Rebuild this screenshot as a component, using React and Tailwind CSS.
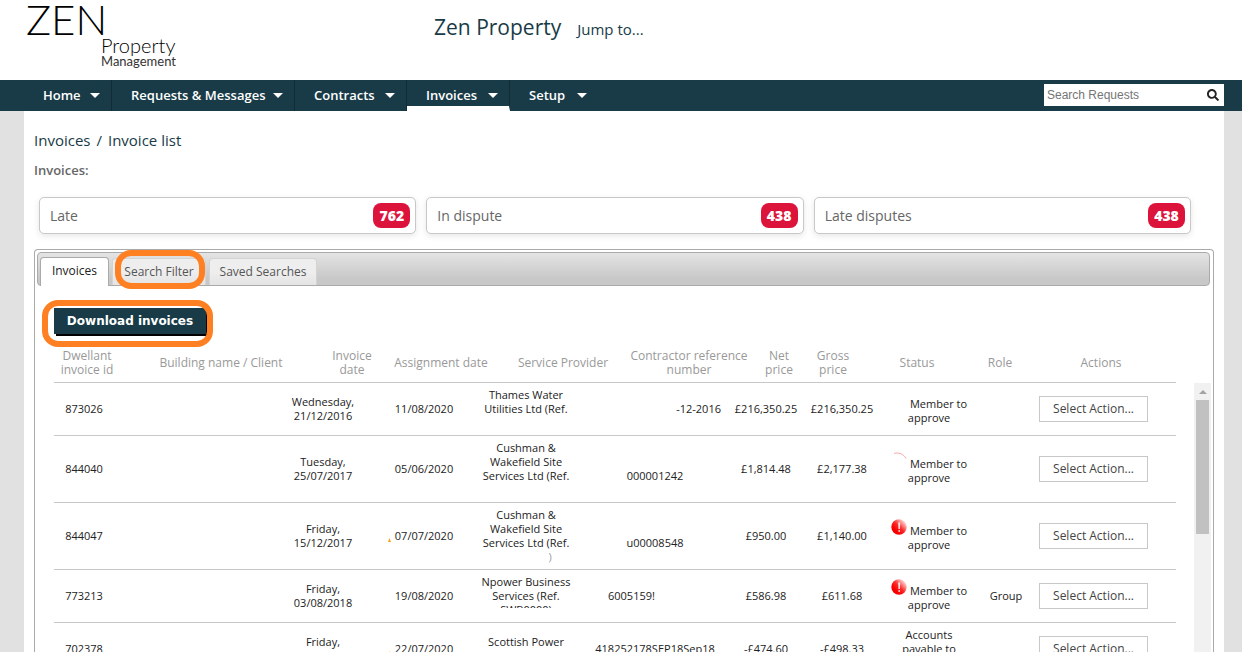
import { FaSearch } from "react-icons/fa";

const navItems = [
  { label: "Home", width: "w-[88px]" },
  { label: "Requests & Messages", width: "w-[183px]" },
  { label: "Contracts", width: "w-[112px]" },
  { label: "Invoices", width: "w-[103px]", active: true },
  { label: "Setup", width: "w-[88px]", last: true },
];

const counters = [
  { label: "Late", count: 762 },
  { label: "In dispute", count: 438 },
  { label: "Late disputes", count: 438 },
];

const headColumns = [
  { label: "Dwellant invoice id", width: "w-[66px]" },
  { label: "Building name / Client", width: "w-[202px]" },
  { label: "Invoice date", width: "w-[60px]" },
  { label: "Assignment date", width: "w-[118px]" },
  { label: "Service Provider", width: "w-[126px]" },
  { label: "Contractor reference number", width: "w-[126px]" },
  { label: "Net price", width: "w-[54px]" },
  { label: "Gross price", width: "w-[54px]" },
  { label: "Status", width: "w-[114px]" },
  { label: "Role", width: "w-[52px]" },
  { label: "Actions", width: "w-[150px]" },
];

const bodyWidths = [
  "w-[60px]",
  "w-[158px]",
  "w-[102px]",
  "w-[100px]",
  "w-[104px]",
  "w-[154px]",
  "w-[68px]",
  "w-[84px]",
  "w-[90px]",
  "w-[64px]",
  "w-[138px]",
];

const rows = [
  {
    id: "873026",
    day: "Wednesday,",
    date: "21/12/2016",
    assigned: "11/08/2020",
    provider: ["Thames Water", "Utilities Ltd (Ref.", ""],
    reference: ["-12-2016"],
    refClass: "text-right pr-[11px]",
    net: "£216,350.25",
    gross: "£216,350.25",
    status: ["Member to", "approve"],
    icon: "blank",
  },
  {
    id: "844040",
    day: "Tuesday,",
    date: "25/07/2017",
    assigned: "05/06/2020",
    provider: ["Cushman &", "Wakefield Site", "Services Ltd (Ref.", ""],
    reference: ["", "000001242"],
    refClass: "text-center",
    net: "£1,814.48",
    gross: "£2,177.38",
    status: ["Member to", "approve"],
    icon: "faded",
  },
  {
    id: "844047",
    day: "Friday,",
    date: "15/12/2017",
    assigned: "07/07/2020",
    provider: ["Cushman &", "Wakefield Site", "Services Ltd (Ref.", ""],
    trailing: "paren",
    flagged: true,
    reference: ["", "u00008548"],
    refClass: "text-center",
    net: "£950.00",
    gross: "£1,140.00",
    status: ["Member to", "approve"],
    icon: "alert",
  },
  {
    id: "773213",
    day: "Friday,",
    date: "03/08/2018",
    assigned: "19/08/2020",
    provider: ["Npower Business", "Services (Ref.", ""],
    trailing: "clipped",
    reference: ["6005159!"],
    refClass: "text-left pl-[30px]",
    net: "£586.98",
    gross: "£611.68",
    status: ["Member to", "approve"],
    icon: "alert",
    role: "Group",
  },
  {
    id: "702378",
    day: "Friday,",
    date: "14/09/2018",
    assigned: "22/07/2020",
    provider: ["Scottish Power", "(Ref. SCO0000)"],
    flagged: true,
    reference: ["418252178SEP18Sep18"],
    refClass: "text-center",
    net: "-£474.60",
    gross: "-£498.33",
    status: ["Accounts", "payable to", "approve"],
  },
];

function Caret() {
  return (
    <svg className="h-[5px] w-[10px]" viewBox="0 0 10 5" aria-hidden="true">
      <path d="M0 0h10L5 5z" fill="#fff" />
    </svg>
  );
}

function StatusIcon({ kind }) {
  return (
    <svg className="mr-[3px] inline-block size-4 align-[0px]" viewBox="0 0 16 16" aria-hidden="true">
      {kind === "faded" && (
        <path d="M3 1.5C7 .2 12.500 1.500 15 6.500" fill="none" stroke="#f58080" strokeWidth="1" strokeOpacity="0.7" />
      )}
      {kind === "alert" && (
        <>
          <defs>
            <linearGradient id="alertRed" x1="0.25" y1="0.7" x2="0.85" y2="0.1">
              <stop offset="0" stopColor="#f80000" />
              <stop offset="0.4" stopColor="#fb2a2a" />
              <stop offset="1" stopColor="#ffe4e4" />
            </linearGradient>
          </defs>
          <circle cx="8" cy="8" r="7.700" fill="url(#alertRed)" />
          <path d="M7.200 3.500h2l-.3 6.500H7.500z" fill="#fff" fillOpacity="0.85" />
          <circle cx="8.200" cy="12" r="0.900" fill="#fff" fillOpacity="0.85" />
        </>
      )}
    </svg>
  );
}

function ProviderCell({ row }) {
  return row.provider.map((line, i) => (
    <div key={i} className="h-[14px]">
      {line}
      {!line && row.trailing === "paren" && <span className="pl-12 text-gray-400">)</span>}
      {!line && row.trailing === "clipped" && <div className="h-[5px] overflow-hidden">SWB0000)</div>}
    </div>
  ));
}

function Row({ row }) {
  return (
    <tr className="border-b border-[#c8c8c8]">
      <td className="py-[5px]">{row.id}</td>
      <td></td>
      <td>
        {row.day}
        <br />
        {row.date}
      </td>
      <td>
        <span className="relative">
          {row.flagged && (
            <svg className="absolute bottom-px -left-[7px] h-[4px] w-[3px]" viewBox="0 0 3 4" aria-hidden="true">
              <path d="M1.500 0L3 4H0z" fill="#f9a11b" />
            </svg>
          )}
          {row.assigned}
        </span>
      </td>
      <td className="py-[5px] whitespace-nowrap">
        <ProviderCell row={row} />
      </td>
      <td className={row.refClass}>
        {row.reference.map((line, i) => (
          <div key={i} className="h-[14px]">
            {line}
          </div>
        ))}
      </td>
      <td>{row.net}</td>
      <td>{row.gross}</td>
      <td className={row.icon ? "pb-[2px] whitespace-nowrap" : "py-[5px] whitespace-nowrap"}>
        {row.status.map((line, i) => (
          <div key={line}>
            {i === 0 && row.icon && <StatusIcon kind={row.icon} />}
            {line}
          </div>
        ))}
      </td>
      <td>{row.role}</td>
      <td className="pl-px text-left">
        <button
          type="button"
          className="h-[26px] w-[109px] border border-[#c8c8c8] bg-white text-[12px] leading-[14px] text-[#444]"
        >
          Select Action...
        </button>
      </td>
    </tr>
  );
}

function Ring({ className }) {
  return (
    <span
      aria-hidden="true"
      className={`pointer-events-none absolute z-10 rounded-2xl border-[6px] border-[#ff8022] ${className}`}
    />
  );
}

export default function App() {
  return (
    <div className="flex h-screen flex-col overflow-hidden bg-white pb-3 font-['Open_Sans',sans-serif] text-[#222]">
      <header className="flex h-20 shrink-0 items-start">
        <div className="w-[434px] shrink-0 pt-px pl-[26px] font-['Lato',sans-serif] text-black">
          <div className="text-[42px] leading-[36px] font-light">ZEN</div>
          <div className="pl-[75px] text-[20px] leading-[16px] font-light">Property</div>
          <div className="pl-[75px] text-[13px] leading-[16px] text-[#333]">Management</div>
        </div>
        <div className="flex items-baseline gap-4 pt-[11px] text-[#183b47]">
          <h1 className="text-[21px] leading-8">Zen Property</h1>
          <a href="#jump" className="text-[15px]">
            Jump to...
          </a>
        </div>
      </header>

      <nav className="flex h-[31px] shrink-0 items-start justify-between bg-[#183b47] pr-[18px] pl-6">
        <ul className="flex h-full">
          {navItems.map((item) => (
            <li
              key={item.label}
              className={`${item.width} ${item.active ? "border-b-[5px] border-b-white" : ""} ${
                item.last ? "" : "border-r border-r-[#122c35]"
              }`}
            >
              <a
                href={`#${item.label}`}
                className="flex h-[31px] items-center justify-between pr-[11px] pl-[19px] text-[13px] font-semibold whitespace-nowrap text-white"
              >
                {item.label}
                <Caret />
              </a>
            </li>
          ))}
        </ul>
        <form className="mt-1 flex h-[22px] w-[180px] items-center bg-white pr-[5px] pl-[3px]">
          <input
            type="search"
            aria-label="Search Requests"
            placeholder="Search Requests"
            className="min-w-0 flex-1 bg-transparent font-['Liberation_Sans',sans-serif] text-[12px] text-[#222] outline-none placeholder:text-[#757575]"
          />
          <button type="submit" aria-label="Search">
            <FaSearch className="size-3 text-[#222]" />
          </button>
        </form>
      </nav>

      <div className="min-h-0 flex-1 bg-[#e1e1e1] pr-[18px] pl-6">
        <main className="flex h-full flex-col bg-white pr-[10px] pl-[10px]">
          <div className="flex gap-[6px] pt-[18px] text-[15px] leading-[22px] text-[#183b47]">
            <a href="#invoices">Invoices</a>
            <span>/</span>
            <a href="#list">Invoice list</a>
          </div>
          <h2 className="pt-[10px] text-[13px] leading-[18px] font-semibold text-[#666]">Invoices:</h2>

          <div className="mt-[18px] mr-[23px] ml-[5px] grid shrink-0 grid-cols-3 gap-[10px]">
            {counters.map((c) => (
              <a
                key={c.label}
                href={`#${c.label}`}
                className="flex h-[37px] items-center justify-between rounded-[5px] border border-[#c8c8c8] bg-white pr-[5px] pl-[10px] text-[14px] text-[#666] shadow-[0_2px_6px_rgba(0,0,0,0.1)]"
              >
                {c.label}
                <span className="flex h-[25px] w-[37px] items-center justify-center rounded-lg bg-[#dc143c] text-[14px] font-extrabold text-white">
                  {c.count}
                </span>
              </a>
            ))}
          </div>

          <section className="mt-[15px] flex min-h-0 flex-1 flex-col rounded-t-[4px] border border-b-0 border-[#aaa] p-[2px] pb-0">
            <div
              role="tablist"
              className="mr-px flex h-[34px] shrink-0 items-end gap-[3px] rounded-[4px] border border-[#aaa] bg-linear-to-b from-[#e4e4e4] to-[#c8c8c8] to-80% pl-[2px] text-[12px]"
            >
              <button
                type="button"
                role="tab"
                aria-selected="true"
                className="-mb-px h-[29px] w-[69px] rounded-t-[4px] border border-b-0 border-[#aaa] bg-white pb-[2px] text-[#222]"
              >
                Invoices
              </button>
              <div className="relative">
                <button
                  type="button"
                  role="tab"
                  aria-selected="false"
                  className="block h-[27px] w-[94px] rounded-t-[4px] border border-b-0 border-[#d3d3d3] bg-linear-to-b from-[#eee] from-50% to-[#e4e4e4] pb-px text-[#555]"
                >
                  Search Filter
                </button>
                <Ring className="-top-2 left-[3px] h-[39px] w-[90px]" />
              </div>
              <button
                type="button"
                role="tab"
                aria-selected="false"
                className="h-[27px] w-[108px] rounded-t-[4px] border border-b-0 border-[#d3d3d3] bg-linear-to-b from-[#eee] from-50% to-[#e4e4e4] pb-px text-[#555]"
              >
                Saved Searches
              </button>
            </div>

            <div className="flex min-h-0 flex-1 flex-col pt-[22px] pl-[17px]">
              <div className="relative self-start">
                <button
                  type="button"
                  className="block h-[26px] w-[152px] bg-[#183b47] font-['DejaVu_Sans',sans-serif] text-[12px] font-bold text-white shadow-[2px_2px_0_#000]"
                >
                  Download invoices
                </button>
                <Ring className="-top-2 -left-3 h-[47px] w-[171px]" />
              </div>

              <table className="mt-[15px] mr-[35px] shrink-0 table-fixed border-collapse text-[12px] leading-[14px] text-[#999]">
                <colgroup>
                  {headColumns.map((c) => (
                    <col key={c.label} className={c.width} />
                  ))}
                </colgroup>
                <thead>
                  <tr className="border-b border-[#c8c8c8]">
                    {headColumns.map((c) => (
                      <th key={c.label} scope="col" className="px-[3px] pb-[5px] font-normal">
                        {c.label}
                      </th>
                    ))}
                  </tr>
                </thead>
              </table>

              <div className="flex min-h-0 flex-1">
                <div className="min-w-0 flex-1 overflow-hidden">
                  <table className="w-full table-fixed border-collapse text-center text-[11px] leading-[14px]">
                    <colgroup>
                      {bodyWidths.map((w, i) => (
                        <col key={i} className={w} />
                      ))}
                    </colgroup>
                    <tbody>
                      {rows.map((row) => (
                        <Row key={row.id} row={row} />
                      ))}
                    </tbody>
                  </table>
                </div>
                <div aria-hidden="true" className="ml-[18px] flex w-[17px] shrink-0 flex-col items-center bg-[#f1f1f1]">
                  <svg className="mt-[7px] mb-[6px] h-[4px] w-[8px] shrink-0" viewBox="0 0 8 4">
                    <path d="M4 0l4 4H0z" fill="#a3a3a3" />
                  </svg>
                  <div className="h-[134px] w-[13px] shrink-0 bg-[#c1c1c1]" />
                </div>
              </div>
            </div>
          </section>
        </main>
      </div>
    </div>
  );
}
